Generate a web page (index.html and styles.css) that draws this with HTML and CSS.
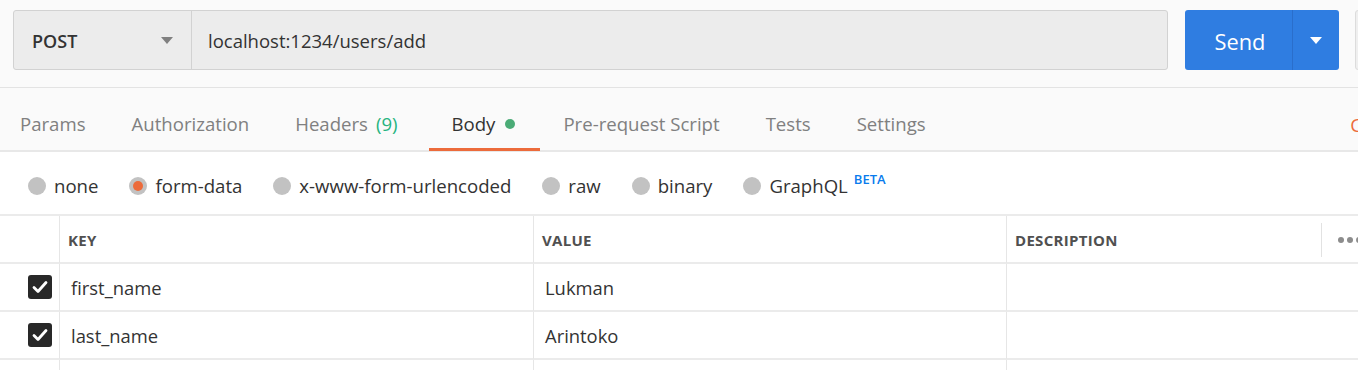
FILE: index.html
```html
<!DOCTYPE html>
<html>
<head>
<meta charset="utf-8">
<link rel="stylesheet" href="styles.css">
</head>
<body>
<div class="app">
  <div class="topbar">
    <div class="request">
      <div class="method">
        <span class="method-name">POST</span>
        <span class="caret-gray"></span>
      </div>
      <div class="url">localhost:1234/users/add</div>
    </div>
    <div class="send">
      <span class="send-label">Send</span>
      <span class="send-drop"><span class="caret-white"></span></span>
    </div>
    <div class="save"></div>
  </div>

  <div class="tabs">
    <div class="tab tab-first">Params</div>
    <div class="tab">Authorization</div>
    <div class="tab tab-headers">Headers <span class="count">(9)</span></div>
    <div class="tab active">Body <span class="dot"></span></div>
    <div class="tab">Pre-request Script</div>
    <div class="tab">Tests</div>
    <div class="tab">Settings</div>
    <div class="tab-link">Cookies</div>
  </div>

  <div class="bodytypes">
    <label class="radio"><span class="circle"></span>none</label>
    <label class="radio"><span class="circle selected"></span>form-data</label>
    <label class="radio"><span class="circle"></span>x-www-form-urlencoded</label>
    <label class="radio"><span class="circle"></span>raw</label>
    <label class="radio"><span class="circle"></span>binary</label>
    <label class="radio"><span class="circle"></span>GraphQL<sup class="beta">BETA</sup></label>
  </div>

  <div class="table">
    <div class="cell head check-col"></div>
    <div class="cell head">KEY</div>
    <div class="cell head">VALUE</div>
    <div class="cell head">DESCRIPTION</div>
    <div class="cell head more"><span class="vsep"></span><span class="dots"><i></i><i></i><i></i></span></div>

    <div class="cell check-col"><span class="checkbox"><svg width="16" height="14" viewBox="0 0 16 14"><path d="M2 7.5 L6 11.5 L14 2.5" fill="none" stroke="#fff" stroke-width="2.8" stroke-linecap="round" stroke-linejoin="round"/></svg></span></div>
    <div class="cell">first_name</div>
    <div class="cell">Lukman</div>
    <div class="cell"></div>
    <div class="cell last"></div>

    <div class="cell check-col"><span class="checkbox"><svg width="16" height="14" viewBox="0 0 16 14"><path d="M2 7.5 L6 11.5 L14 2.5" fill="none" stroke="#fff" stroke-width="2.8" stroke-linecap="round" stroke-linejoin="round"/></svg></span></div>
    <div class="cell">last_name</div>
    <div class="cell">Arintoko</div>
    <div class="cell"></div>
    <div class="cell last"></div>

    <div class="cell check-col"></div>
    <div class="cell"></div>
    <div class="cell"></div>
    <div class="cell"></div>
    <div class="cell last"></div>
  </div>
</div>
</body>
</html>
```

FILE: styles.css
```css
html, body {
  margin: 0;
  padding: 0;
  background: #ffffff;
  overflow: hidden;
}

.app {
  width: 1440px;
  font-family: "Open Sans", "Noto Sans", sans-serif;
  color: #333333;
}

/* top bar */
.topbar {
  display: flex;
  align-items: stretch;
  background: #fafafa;
  padding: 10px 13px 17px 13px;
  border-bottom: 1px solid #e3e3e3;
}

.request {
  flex: 1;
  display: flex;
  height: 58px;
  background: #ececec;
  border: 1px solid #d2d2d2;
  border-radius: 3px;
}

.method {
  width: 178px;
  display: flex;
  align-items: center;
  justify-content: space-between;
  padding: 1px 18px 0 18px;
  box-sizing: border-box;
  border-right: 1px solid #d2d2d2;
}

.method-name {
  font-size: 18px;
  font-weight: 600;
  color: #333;
}

.caret-gray {
  width: 0;
  height: 0;
  border-left: 6px solid transparent;
  border-right: 6px solid transparent;
  border-top: 7px solid #808080;
}

.url {
  display: flex;
  align-items: center;
  padding-left: 16px;
  padding-top: 1px;
  font-size: 18.5px;
  color: #333;
}

.send {
  margin-left: 17px;
  width: 154px;
  height: 60px;
  display: flex;
  background: #2f7de1;
  border-radius: 3px;
  color: #fff;
}

.send-label {
  flex: 1;
  display: flex;
  align-items: center;
  justify-content: center;
  font-size: 21.8px;
  font-weight: 500;
  padding-left: 3px;
  padding-top: 2px;
  border-right: 1px solid #2a6ecb;
}

.send-drop {
  width: 46px;
  display: flex;
  align-items: center;
  justify-content: center;
}

.caret-white {
  width: 0;
  height: 0;
  border-left: 6px solid transparent;
  border-right: 6px solid transparent;
  border-top: 7px solid #ffffff;
}

.save {
  margin-left: 16px;
  width: 70px;
  height: 58px;
  background: #efefef;
  border: 1px solid #dcdcdc;
  border-radius: 3px;
}

/* tabs */
.tabs {
  display: flex;
  align-items: stretch;
  height: 62px;
  background: #fafafa;
  border-bottom: 2px solid #e8e8e8;
}

.tab {
  display: flex;
  align-items: center;
  padding: 11px 23px 0 23px;
  font-size: 18.6px;
  color: #808080;
  border-bottom: 3px solid transparent;
  margin-bottom: -1px;
  white-space: nowrap;
}

.tab-first {
  padding-left: 20px;
}

.tab-headers {
  padding-right: 31px;
}

.tab .count {
  color: #26b47f;
  margin-left: 8px;
}

.tab.active {
  color: #333333;
  border-bottom-color: #ec6b3b;
  padding-right: 25px;
}

.dot {
  display: inline-block;
  width: 10px;
  height: 10px;
  border-radius: 50%;
  background: #4aab76;
  margin-left: 10px;
  margin-top: 1px;
}

.tab-link {
  margin-left: auto;
  display: flex;
  align-items: center;
  padding-top: 11px;
  padding-right: 22px;
  font-size: 18.6px;
  color: #ec6b3b;
}

/* body types */
.bodytypes {
  display: flex;
  align-items: center;
  height: 62px;
  padding-left: 28px;
  padding-top: 5px;
  box-sizing: border-box;
}

.radio {
  display: flex;
  align-items: center;
  font-size: 18.6px;
  color: #333;
  margin-right: 31px;
}

.circle {
  width: 18px;
  height: 18px;
  border-radius: 50%;
  background: #c2c2c2;
  margin-right: 8px;
  display: flex;
  align-items: center;
  justify-content: center;
}

.circle.selected::after {
  content: "";
  width: 10px;
  height: 10px;
  border-radius: 50%;
  background: #ec6b3b;
}

.beta {
  font-size: 13px;
  font-weight: 600;
  color: #097bed;
  margin-left: 6px;
  vertical-align: 0;
  position: relative;
  top: -7px;
}

/* table */
.table {
  display: grid;
  grid-template-columns: 59px 474px 473px 315px 1fr;
  grid-auto-rows: 48px;
  border-top: 2px solid #ebebeb;
}

.cell {
  display: flex;
  align-items: center;
  border-bottom: 2px solid #ebebeb;
  border-left: 1px solid #e6e6e6;
  padding-left: 11px;
  font-size: 18.4px;
  color: #333;
  box-sizing: border-box;
}

.cell.check-col {
  border-left: none;
  padding-left: 0;
  justify-content: flex-end;
  padding-right: 7px;
}

.cell.last,
.cell.more {
  border-left: none;
}

.cell.head {
  font-size: 15px;
  font-weight: 700;
  color: #505050;
  letter-spacing: 0.3px;
  padding-left: 8px;
  padding-top: 1px;
}

.cell.head.check-col {
  padding-left: 0;
}

.cell.more {
  padding-left: 0;
}

.vsep {
  width: 1px;
  height: 34px;
  background: #e2e2e2;
}

.dots {
  display: flex;
  margin-left: 16px;
  gap: 3px;
}

.dots i {
  width: 6px;
  height: 6px;
  border-radius: 50%;
  background: #8c8c8c;
}

.checkbox {
  width: 24px;
  height: 24px;
  border-radius: 3px;
  background: #282828;
  display: flex;
  align-items: center;
  justify-content: center;
}
```
